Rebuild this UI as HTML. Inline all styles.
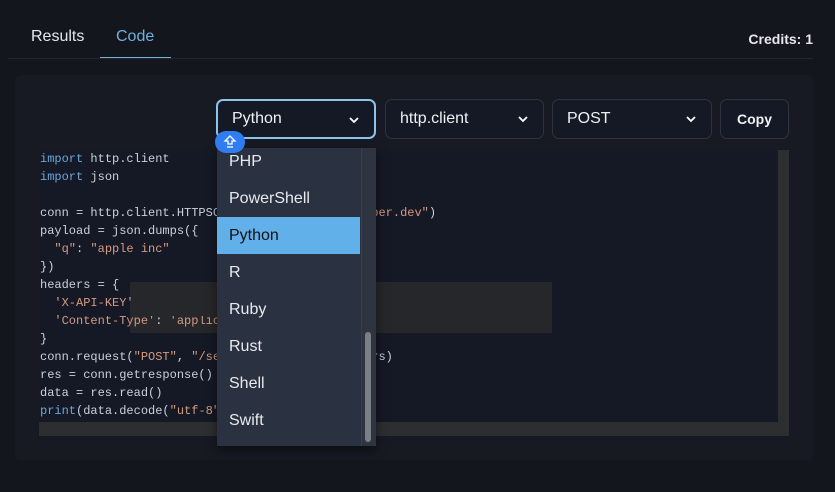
<!DOCTYPE html>
<html><head><meta charset="utf-8"><style>
*{box-sizing:border-box;margin:0;padding:0}
body{width:835px;height:492px;background:#14161e;font-family:"Liberation Sans",sans-serif;position:relative;overflow:hidden;color:#e6e8ec}
.abs{position:absolute}
.tab{font-size:16px;top:28px}
.sel{position:absolute;top:99px;height:40px;border:1px solid #2d3340;border-radius:7px;background:#151925;font-size:16px;padding:0 14px;line-height:38px;color:#eef0f3}
.chev{position:absolute;right:14px;top:15px;width:12px;height:8px}
pre{position:absolute;left:40px;top:150px;font-family:"Liberation Mono",monospace;font-size:12px;line-height:18px;color:#c9d1dc}
.k{color:#6aa7d8}.s{color:#d49a82}
.item{height:37px;line-height:37px;padding-left:12px;font-size:16px;color:#e8eaee}
</style></head><body>
<div class="abs tab" style="left:31px">Results</div>
<div class="abs tab" style="left:116px;color:#6fb0e0">Code</div>
<div class="abs" style="left:100px;top:57px;width:71px;height:2px;background:#6fb0e0"></div>
<div class="abs" style="left:8px;top:58px;width:805px;height:1px;background:#23262f"></div>
<div class="abs" style="right:22px;top:31px;font-size:14px;font-weight:bold">Credits: 1</div>
<div class="abs" style="left:15px;top:75px;width:798px;height:385px;background:#171a23;border-radius:6px"></div>
<div class="abs" style="left:39px;top:150px;width:750px;height:286px;background:#151925"></div>
<div class="abs" style="left:778px;top:150px;width:11px;height:286px;background:#2d2e30"></div>
<div class="abs" style="left:39px;top:422px;width:750px;height:14px;background:#2d2e30"></div>
<div class="abs" style="left:130px;top:282px;width:422px;height:51px;background:#26272a"></div>
<pre><span class="k">import</span> http.client
<span class="k">import</span> json

conn = http.client.HTTPSConnection(<span class="s">"google.serper.dev"</span>)
payload = json.dumps({
  <span class="s">"q"</span>: <span class="s">"apple inc"</span>
})
headers = {
  <span class="s">'X-API-KEY'</span>
  <span class="s">'Content-Type'</span>: <span class="s">'application/json'</span>
}
conn.request(<span class="s">"POST"</span>, <span class="s">"/search"</span>, payload, headers)
res = conn.getresponse()
data = res.read()
<span class="k">print</span>(data.decode(<span class="s">"utf-8"</span>))</pre>
<div class="abs" style="left:133px;top:282px;width:80px;height:34px;background:#26272a"></div>
<div class="sel" style="left:216px;width:160px;border:2px solid #8cc4ea;line-height:36px">Python<svg class="chev" viewBox="0 0 12 8"><path d="M2 2l4 4 4-4" stroke="#fff" stroke-width="1.8" fill="none"/></svg></div>
<div class="sel" style="left:385px;width:159px">http.client<svg class="chev" viewBox="0 0 12 8"><path d="M2 2l4 4 4-4" stroke="#fff" stroke-width="1.8" fill="none"/></svg></div>
<div class="sel" style="left:552px;width:160px">POST<svg class="chev" viewBox="0 0 12 8"><path d="M2 2l4 4 4-4" stroke="#fff" stroke-width="1.8" fill="none"/></svg></div>
<div class="sel" style="left:720px;width:69px;font-size:14px;font-weight:bold;padding:0 16px">Copy</div>
<div class="abs" style="left:217px;top:148px;width:159px;height:298px;background:#2a3140;box-shadow:0 4px 10px rgba(0,0,0,.5);overflow:hidden">
<div style="margin-top:-5px">
<div class="item">PHP</div><div class="item">PowerShell</div>
<div class="item" style="background:#62b0ea;width:143px;color:#111">Python</div>
<div class="item">R</div><div class="item">Ruby</div><div class="item">Rust</div><div class="item">Shell</div><div class="item">Swift</div>
</div>
<div class="abs" style="left:144px;top:0;width:15px;height:298px;background:#2f3540;border-left:1px solid #3a404b"></div>
<div class="abs" style="left:148px;top:184px;width:6px;height:110px;background:#7b7f86;border-radius:3px"></div>
</div>
<div class="abs" style="left:215px;top:131px;width:30px;height:22px;background:#2f7df0;border-radius:11px"><svg viewBox="0 0 30 22" width="30" height="22"><path d="M15 5l-5 5h3v3h4v-3h3z" stroke="#fff" stroke-width="1.3" fill="none"/><path d="M12 16h6" stroke="#fff" stroke-width="1.3"/></svg></div>
</body></html>
